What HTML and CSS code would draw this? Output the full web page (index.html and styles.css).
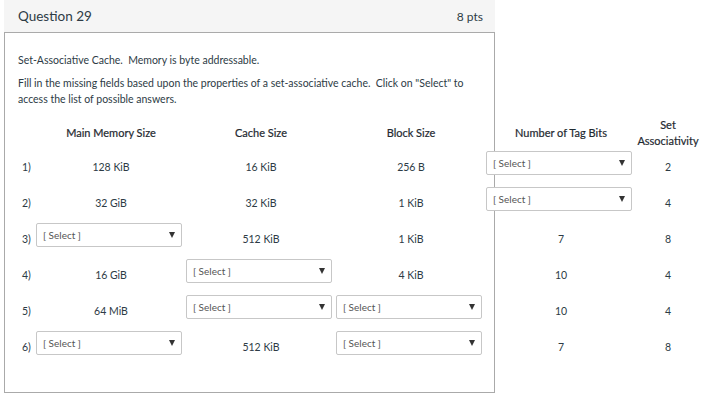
FILE: index.html
```html
<!DOCTYPE html>
<html lang="en">
<head>
  <meta charset="UTF-8" />
  <title>Question 29</title>
  <link rel="stylesheet" href="styles.css">
</head>
<body>
  <div class="question">
    <div class="question-header">
      <span class="question-name">Question 29</span>
      <span class="question-points">8 pts</span>
    </div>

    <div class="question-text">
      <p>Set-Associative Cache.&nbsp; Memory is byte addressable.</p>
      <p class="instructions">Fill in the missing fields based upon the properties of a set-associative cache.&nbsp; Click on "Select" to access the list of possible answers.</p>

      <table class="cache-table">
        <colgroup>
          <col class="col-num">
          <col class="col-data">
          <col class="col-data">
          <col class="col-data">
          <col class="col-data">
          <col class="col-assoc">
        </colgroup>
        <thead>
          <tr>
            <th></th>
            <th>Main Memory Size</th>
            <th>Cache Size</th>
            <th>Block Size</th>
            <th>Number of Tag Bits</th>
            <th>Set Associativity</th>
          </tr>
        </thead>
        <tbody>
          <tr>
            <td class="num">1)</td>
            <td>128 KiB</td>
            <td>16 KiB</td>
            <td>256 B</td>
            <td><select><option>[ Select ]</option></select></td>
            <td>2</td>
          </tr>
          <tr>
            <td class="num">2)</td>
            <td>32 GiB</td>
            <td>32 KiB</td>
            <td>1 KiB</td>
            <td><select><option>[ Select ]</option></select></td>
            <td>4</td>
          </tr>
          <tr>
            <td class="num">3)</td>
            <td><select><option>[ Select ]</option></select></td>
            <td>512 KiB</td>
            <td>1 KiB</td>
            <td>7</td>
            <td>8</td>
          </tr>
          <tr>
            <td class="num">4)</td>
            <td>16 GiB</td>
            <td><select><option>[ Select ]</option></select></td>
            <td>4 KiB</td>
            <td>10</td>
            <td>4</td>
          </tr>
          <tr>
            <td class="num">5)</td>
            <td>64 MiB</td>
            <td><select><option>[ Select ]</option></select></td>
            <td><select><option>[ Select ]</option></select></td>
            <td>10</td>
            <td>4</td>
          </tr>
          <tr>
            <td class="num">6)</td>
            <td><select><option>[ Select ]</option></select></td>
            <td>512 KiB</td>
            <td><select><option>[ Select ]</option></select></td>
            <td>7</td>
            <td>8</td>
          </tr>
        </tbody>
      </table>
    </div>
  </div>
</body>
</html>
```

FILE: styles.css
```css
:root {
  --text: #2d3b45; --border: #aaa; --header-bg: #f5f5f5; --select-border: #c7c7c7;
}
body { margin: 0; background: #fff; color: var(--text); font-family: Lato, "Open Sans", sans-serif; }

.question { width: 491px; margin-left: 4px; }
.question-header { height: 32px; background: var(--header-bg); display: flex; align-items: center; justify-content: space-between; padding: 0 12px 0 14px; }
.question-name { font-size: 13.5px; }
.question-points { font-size: 12px; }

.question-text { border: 1px solid var(--border); padding: 19px 13px 27px 13px; font-size: 10.5px; line-height: 16px; }
.question-text p { margin: 0 0 7px; }
.question-text p.instructions { margin-bottom: 10px; }

.cache-table { border-collapse: collapse; table-layout: fixed; width: 682px; }
.col-num { width: 18px; }
.col-data { width: 150px; }
.col-assoc { width: 64px; }
.cache-table th { height: 32px; padding: 0; font-size: 11px; font-weight: 400; color: #1f2a31; text-align: center; vertical-align: middle; -webkit-text-stroke: 0.2px #1f2a31; }
.cache-table td { height: 36px; padding: 0; text-align: center; vertical-align: middle; }
.cache-table td.num { text-align: left; padding-left: 4px; }

select { appearance: none; -webkit-appearance: none; display: block; width: 146px; height: 24px; margin: 0 0 8px; padding: 0 20px 0 6px;
  border: 1px solid var(--select-border); border-radius: 2px; background: #fff; color: #555; font-family: inherit; font-size: 10px;
  background-image: url("data:image/svg+xml;charset=UTF-8,%3csvg xmlns='http://www.w3.org/2000/svg' width='6' height='6' viewBox='0 0 6 6'%3e%3cpolygon points='0,0 6,0 3,6' fill='%23333'/%3e%3c/svg%3e");
  background-repeat: no-repeat; background-position: right 6px center; background-size: 6px 6px; }
```
